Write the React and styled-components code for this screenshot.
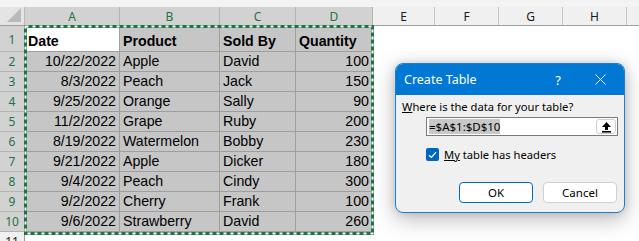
import React from 'react'
import styled, { createGlobalStyle } from 'styled-components'

const GlobalStyle = createGlobalStyle`
  html, body { margin: 0; padding: 0; background: #ffffff; }
  body { width: 639px; height: 241px; overflow: hidden; }
`

const widths = [25, 95, 100, 76, 77, 62, 64, 64, 64]
const letters = ['A', 'B', 'C', 'D', 'E', 'F', 'G', 'H']

const rows = [
  ['Date', 'Product', 'Sold By', 'Quantity'],
  ['10/22/2022', 'Apple', 'David', '100'],
  ['8/3/2022', 'Peach', 'Jack', '150'],
  ['9/25/2022', 'Orange', 'Sally', '90'],
  ['11/2/2022', 'Grape', 'Ruby', '200'],
  ['8/19/2022', 'Watermelon', 'Bobby', '230'],
  ['9/21/2022', 'Apple', 'Dicker', '180'],
  ['9/4/2022', 'Peach', 'Cindy', '300'],
  ['9/2/2022', 'Cherry', 'Frank', '100'],
  ['9/6/2022', 'Strawberry', 'David', '260'],
]

const App = () => {
  return (
    <>
      <GlobalStyle />
      <Page>
        <TopStrip />
        <Sheet>
          <Corner>
            <svg width="14" height="14" viewBox="0 0 14 14">
              <polygon points="14,0 14,14 0,14" fill="#b9b9b9" />
            </svg>
          </Corner>
          {letters.map((l, i) => (
            <ColHead key={l} $sel={i < 4}>{l}</ColHead>
          ))}
          <ColHead $sel={false} $last />

          {rows.map((r, ri) => (
            <React.Fragment key={ri}>
              <RowHead $sel $tall={ri === 0}>{ri + 1}</RowHead>
              {r.map((v, ci) => (
                <Cell
                  key={ci}
                  $sel
                  $active={ri === 0 && ci === 0}
                  $bold={ri === 0}
                  $right={ri > 0 && (ci === 0 || ci === 3)}
                >
                  {v}
                </Cell>
              ))}
              {[0, 1, 2, 3, 4].map(k => <Cell key={'e' + k} />)}
            </React.Fragment>
          ))}

          <RowHead>11</RowHead>
          {[0, 1, 2, 3, 4, 5, 6, 7, 8].map(k => <Cell key={'r' + k} />)}
        </Sheet>

        <Ants width="350" height="210" viewBox="0 0 350 210">
          <rect x="1.5" y="1.5" width="347" height="207" fill="none" stroke="#217346" strokeWidth="3" />
          <rect x="1.5" y="1.5" width="347" height="207" fill="none" stroke="#ffffff" strokeWidth="2" strokeDasharray="3 4" />
        </Ants>

        <Dialog>
          <TitleBar>
            <Title>Create Table</Title>
            <TitleButtons>
              <Help>?</Help>
              <svg width="11" height="11" viewBox="0 0 11 11">
                <path d="M0.5 0.5 L10.5 10.5 M10.5 0.5 L0.5 10.5" stroke="#ffffff" strokeWidth="1" />
              </svg>
            </TitleButtons>
          </TitleBar>
          <Body>
            <Label><u>W</u>here is the data for your table?</Label>
            <RangeBox>
              <RangeText>=$A$1:$D$10</RangeText>
              <PickButton>
                <svg width="11" height="12" viewBox="0 0 11 12">
                  <path d="M5.5 1 L10 6 L7 6 L7 9 L4 9 L4 6 L1 6 Z" fill="#000000" />
                  <rect x="1" y="10" width="9" height="1.6" fill="#000000" />
                </svg>
              </PickButton>
            </RangeBox>
            <CheckRow>
              <CheckBox>
                <svg width="9" height="8" viewBox="0 0 9 8">
                  <path d="M1 4.2 L3.4 6.5 L8 1.2" fill="none" stroke="#ffffff" strokeWidth="1.2" />
                </svg>
              </CheckBox>
              <CheckLabel><u>My</u> table has headers</CheckLabel>
            </CheckRow>
            <Buttons>
              <Button $primary>OK</Button>
              <Button>Cancel</Button>
            </Buttons>
          </Body>
        </Dialog>
      </Page>
    </>
  )
}

export default App

const Page = styled.div`
  position: relative;
  width: 639px;
  height: 241px;
  overflow: hidden;
  background: #ffffff;
`

const TopStrip = styled.div`
  height: 7px;
  background: #f3f3f3;
`

// sheet grid
const Sheet = styled.div`
  display: grid;
  grid-template-columns: ${widths.map(w => w + 'px').join(' ')} 1fr;
  grid-template-rows: 19px 26px repeat(9, 20px) 20px;
  font-family: "Liberation Sans", Arial, sans-serif;
`

const Corner = styled.div`
  background: #e4e4e4;
  border-right: 1px solid #bdbdbd;
  border-bottom: 1px solid #9f9f9f;
  display: flex;
  align-items: flex-end;
  justify-content: flex-end;
  padding: 0 3px 3px 0;
`

const ColHead = styled.div`
  background: ${p => (p.$sel ? '#d2d2d2' : '#f0f0f0')};
  color: ${p => (p.$sel ? '#217346' : '#1a1a1a')};
  border-right: ${p => (p.$last ? 'none' : `1px solid ${p.$sel ? '#b5b5b5' : '#c6c6c6'}`)};
  border-bottom: 1px solid #9f9f9f;
  display: flex;
  align-items: center;
  justify-content: center;
  font-family: "Noto Sans", "Open Sans", sans-serif;
  font-size: 12px;
`

const RowHead = styled.div`
  background: ${p => (p.$sel ? '#d2d2d2' : '#f0f0f0')};
  color: ${p => (p.$sel ? '#217346' : '#1a1a1a')};
  border-right: 1px solid #9f9f9f;
  border-bottom: 1px solid ${p => (p.$sel ? '#b5b5b5' : '#d0d0d0')};
  display: flex;
  align-items: ${p => (p.$tall ? 'flex-end' : 'center')};
  padding-bottom: ${p => (p.$tall ? '3px' : '0')};
  justify-content: center;
  font-family: "Noto Sans", "Open Sans", sans-serif;
  font-size: 12px;
`

const Cell = styled.div`
  background: ${p => (p.$active ? '#ffffff' : p.$sel ? '#c6c6c6' : '#ffffff')};
  border-right: ${p => (p.$sel ? '1px solid #9e9e9e' : 'none')};
  border-bottom: ${p => (p.$sel ? '1px solid #9e9e9e' : 'none')};
  display: flex;
  align-items: flex-end;
  justify-content: ${p => (p.$right ? 'flex-end' : 'flex-start')};
  padding: 0 3px 1px 3px;
  font-size: 14.2px;
  line-height: 17px;
  font-weight: ${p => (p.$bold ? 700 : 400)};
  color: #000000;
  white-space: nowrap;
  overflow: visible;
`

// marching ants around the copied range
const Ants = styled.svg`
  position: absolute;
  left: 24px;
  top: 25px;
`

const Dialog = styled.div`
  position: absolute;
  left: 395px;
  top: 63px;
  width: 230px;
  height: 150px;
  box-sizing: border-box;
  border: 1px solid #1a7fd6;
  border-radius: 8px;
  background: #f0f0f0;
  box-shadow: 0 6px 22px rgba(0, 0, 0, 0.28), 0 0 8px rgba(0, 0, 0, 0.12);
  font-family: "Noto Sans", "Open Sans", sans-serif;
  overflow: hidden;
  display: flex;
  flex-direction: column;
`

const TitleBar = styled.div`
  height: 31px;
  flex: none;
  background: #0078d4;
  display: flex;
  align-items: center;
  justify-content: space-between;
  padding: 0 18px 0 8px;
`

const Title = styled.div`
  color: #ffffff;
  font-size: 12.5px;
`

const TitleButtons = styled.div`
  display: flex;
  align-items: center;
  gap: 34px;
`

const Help = styled.span`
  color: #ffffff;
  font-size: 13px;
`

const Body = styled.div`
  flex: 1;
  padding: 4px 6px 0 6px;
  display: flex;
  flex-direction: column;
  font-size: 11.2px;
`

const Label = styled.div`
  color: #000000;
  line-height: 16px;
  height: 16px;
`

const RangeBox = styled.div`
  margin: 2px 0 0 24px;
  width: 192px;
  height: 19px;
  box-sizing: border-box;
  border: 1px solid #7a7a7a;
  background: #ffffff;
  display: flex;
  align-items: center;
  justify-content: space-between;
  padding: 0 1px 0 2px;
`

const RangeText = styled.span`
  background: #c8c8c8;
  font-size: 11.5px;
  line-height: 15px;
  color: #000000;
`

const PickButton = styled.div`
  width: 20px;
  height: 15px;
  box-sizing: border-box;
  border: 1px solid #cfcfcf;
  border-radius: 3px;
  background: #ffffff;
  display: flex;
  align-items: center;
  justify-content: center;
`

const CheckRow = styled.div`
  margin: 10px 0 0 24px;
  height: 17px;
  display: flex;
  align-items: center;
  gap: 5px;
`

const CheckBox = styled.div`
  width: 13px;
  height: 13px;
  border-radius: 2px;
  background: #0067c0;
  display: flex;
  align-items: center;
  justify-content: center;
`

const CheckLabel = styled.span`
  color: #000000;
  line-height: 17px;
`

const Buttons = styled.div`
  margin-top: 19px;
  display: flex;
  justify-content: flex-end;
  gap: 10px;
  padding-right: 1px;
`

const Button = styled.div`
  width: 74px;
  height: 21px;
  box-sizing: border-box;
  border: 1px solid ${p => (p.$primary ? '#0067c0' : '#d0d0d0')};
  border-radius: 4px;
  background: #ffffff;
  display: flex;
  align-items: center;
  justify-content: center;
  font-size: 11.5px;
  color: #000000;
`
